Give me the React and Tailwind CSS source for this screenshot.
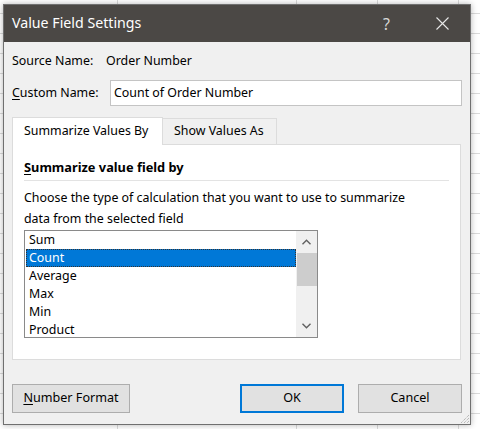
import React from "react";

const items = ["Sum", "Count", "Average", "Max", "Min", "Product"];

function CloseIcon() {
  return (
    <svg width="13" height="13" viewBox="0 0 13 13" className="block">
      <path d="M0.5 0.5 L12.5 12.5 M12.5 0.5 L0.5 12.5" stroke="#e8e8e8" strokeWidth="1.1" fill="none" />
    </svg>
  );
}

function Chevron({ down }) {
  return (
    <svg width="9" height="6" viewBox="0 0 9 6" className="block">
      <path
        d={down ? "M0.5 0.8 L4.5 4.8 L8.5 0.8" : "M0.5 5.2 L4.5 1.2 L8.5 5.2"}
        stroke="#606060"
        strokeWidth="1.4"
        fill="none"
      />
    </svg>
  );
}

function Grip() {
  return (
    <svg width="11" height="11" viewBox="0 0 11 11" className="block">
      <path d="M10 2 L2 10 M10 5 L5 10 M10 8 L8 10" stroke="#a0a0a0" strokeWidth="1" strokeDasharray="1 1" fill="none" />
    </svg>
  );
}

function Btn({ children, primary, className }) {
  return (
    <button
      className={
        "h-[29px] bg-[#e1e1e1] text-[12.6px] text-black flex items-center justify-center " +
        (primary ? "border-2 border-[#0078d7] " : "border border-[#adadad] ") +
        className
      }
    >
      {children}
    </button>
  );
}

export default function App() {
  return (
    <div className="relative w-[480px] h-[429px] overflow-hidden bg-white font-['Noto_Sans',sans-serif]">
      {/* spreadsheet behind */}
      <div className="flex h-full bg-[linear-gradient(to_bottom,#dadada_1px,transparent_1px)] bg-[size:100%_20px] bg-[position:0_13px]">
        <div className="w-[118px] border-r border-[#dadada]"></div>
        <div className="w-[179px] border-r border-[#dadada]"></div>
        <div className="w-[81px] border-r border-[#dadada]"></div>
        <div className="w-[81px] border-r border-[#dadada]"></div>
        <div className="flex-1"></div>
      </div>

      {/* dialog */}
      <div className="absolute left-[3px] top-[4px] w-[468px] h-[421px] bg-[#f0f0f0] border border-[#707070] shadow-[0_0_6px_rgba(0,0,0,0.3)] flex flex-col text-black">
        <div className="h-[37px] bg-[#4b4845] flex items-center pl-[8px] shrink-0">
          <span className="text-[14.2px] text-white leading-none">Value Field Settings</span>
          <span className="ml-auto text-[16px] text-[#d8d8d8] leading-none mr-[46px]">?</span>
          <span className="mr-[21px]">
            <CloseIcon />
          </span>
        </div>

        <div className="flex flex-col px-[8px] text-[12.4px]">
          <div className="flex items-center h-[18px] mt-[10px]">
            <span className="w-[94px]">Source Name:</span>
            <span>Order Number</span>
          </div>

          <div className="flex items-center mt-[10px]">
            <span className="w-[98px]">
              <u className="underline-offset-2">C</u>ustom Name:
            </span>
            <div className="w-[352px] h-[26px] bg-white border border-[#c4c4c4] flex items-center pl-[3px]">
              Count of Order Number
            </div>
          </div>

          {/* tabs */}
          <div className="flex items-end mt-[11px] pl-0">
            <div className="w-[151px] h-[28px] bg-white border border-b-0 border-[#dcdcdc] flex items-center pl-[11px] relative z-10 -mb-px">
              Summarize Values By
            </div>
            <div className="w-[114px] h-[26px] bg-[#f0f0f0] border border-l-0 border-b-0 border-[#dcdcdc] flex items-center pl-[11px]">
              Show Values As
            </div>
          </div>

          <div className="w-[449px] h-[216px] bg-white border border-[#dcdcdc] px-[11px] flex flex-col">
            <div className="h-[18px] mt-[14px] flex items-center font-bold text-[12.8px]">
              <span>
                <u className="underline-offset-2">S</u>ummarize value field by
              </span>
            </div>
            <div className="h-px bg-[#e3e3e3] mt-[3px]"></div>
            <div className="mt-[6px] leading-[21px]">
              Choose the type of calculation that you want to use to summarize
              <br />
              data from the selected field
            </div>

            <div className="mt-[1px] w-[294px] h-[108px] border border-[#8a8a8a] flex">
              <div className="flex-1 flex flex-col pl-px overflow-hidden">
                {items.map((it) =>
                  it === "Count" ? (
                    <div
                      key={it}
                      className="h-[18px] shrink-0 bg-[#0078d7] text-white flex items-center pl-[3px] outline-1 outline-dotted outline-[#333] -outline-offset-1"
                    >
                      {it}
                    </div>
                  ) : (
                    <div key={it} className="h-[18px] shrink-0 flex items-center pl-[3px]">
                      {it}
                    </div>
                  )
                )}
              </div>
              <div className="w-[21px] bg-[#f0f0f0] flex flex-col items-center">
                <div className="h-[22px] flex items-center justify-center">
                  <Chevron />
                </div>
                <div className="w-[20px] h-[33px] bg-[#cdcdcd]"></div>
                <div className="flex-1"></div>
                <div className="h-[22px] flex items-center justify-center">
                  <Chevron down />
                </div>
              </div>
            </div>
          </div>

          {/* buttons */}
          <div className="flex mt-[24px]">
            <Btn className="w-[118px]">
              <span>
                <u className="underline-offset-2">N</u>umber Format
              </span>
            </Btn>
            <Btn primary className="w-[104px] ml-auto">OK</Btn>
            <Btn className="w-[104px] ml-[14px]">Cancel</Btn>
          </div>
        </div>

        <div className="absolute right-0 bottom-0">
          <Grip />
        </div>
      </div>
    </div>
  );
}
